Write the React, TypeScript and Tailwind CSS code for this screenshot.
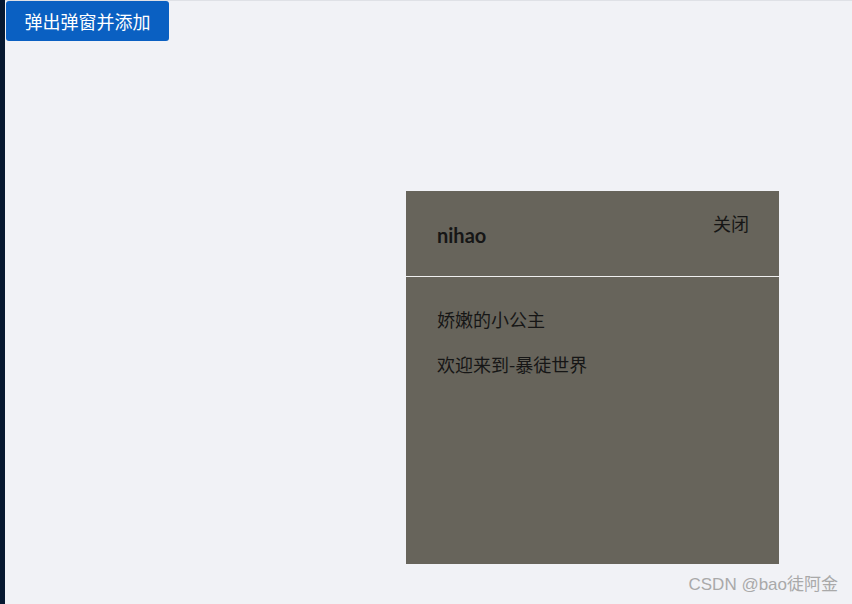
export default function App() {
  return (
    <div
      className="relative flex h-[604px] w-[852px] overflow-hidden bg-[#f1f2f6]"
      style={{ fontFamily: '"Microsoft YaHei", "Noto Sans CJK SC", "Noto Sans", sans-serif' }}
    >
      <div className="w-[5px] shrink-0 bg-[#061830]" />
      <div className="flex-1 border-t border-[#dfe1e6]">
        <button className="ml-[1px] h-[40px] w-[163px] rounded-[3px] bg-[#0a60c2] text-[18px] text-white">
          弹出弹窗并添加
        </button>
      </div>

      <div className="absolute left-[406px] top-[191px] flex h-[373px] w-[373px] flex-col bg-[#67645b] text-[#161616]">
        <div className="flex h-[86px] shrink-0 items-start justify-between border-b border-[#f0f0f0] pl-[31px] pr-[30px]">
          <span className="mt-[31px] text-[20px] font-bold leading-[26px]" style={{ fontFamily: 'Lato, "Noto Sans", sans-serif' }}>
            nihao
          </span>
          <span className="mt-[19px] text-[18px] leading-[26px]">关闭</span>
        </div>
        <div className="flex flex-col gap-[19px] pl-[31px] pt-[29px] text-[18px] leading-[26px]">
          <p>娇嫩的小公主</p>
          <p>欢迎来到-暴徒世界</p>
        </div>
      </div>

      <div
        className="absolute bottom-[7px] right-[14px] text-[17px] text-[#a9a9a9]"
        style={{ fontFamily: '"Liberation Sans", "Noto Sans CJK SC", sans-serif' }}
      >
        CSDN @bao徒阿金
      </div>
    </div>
  )
}
